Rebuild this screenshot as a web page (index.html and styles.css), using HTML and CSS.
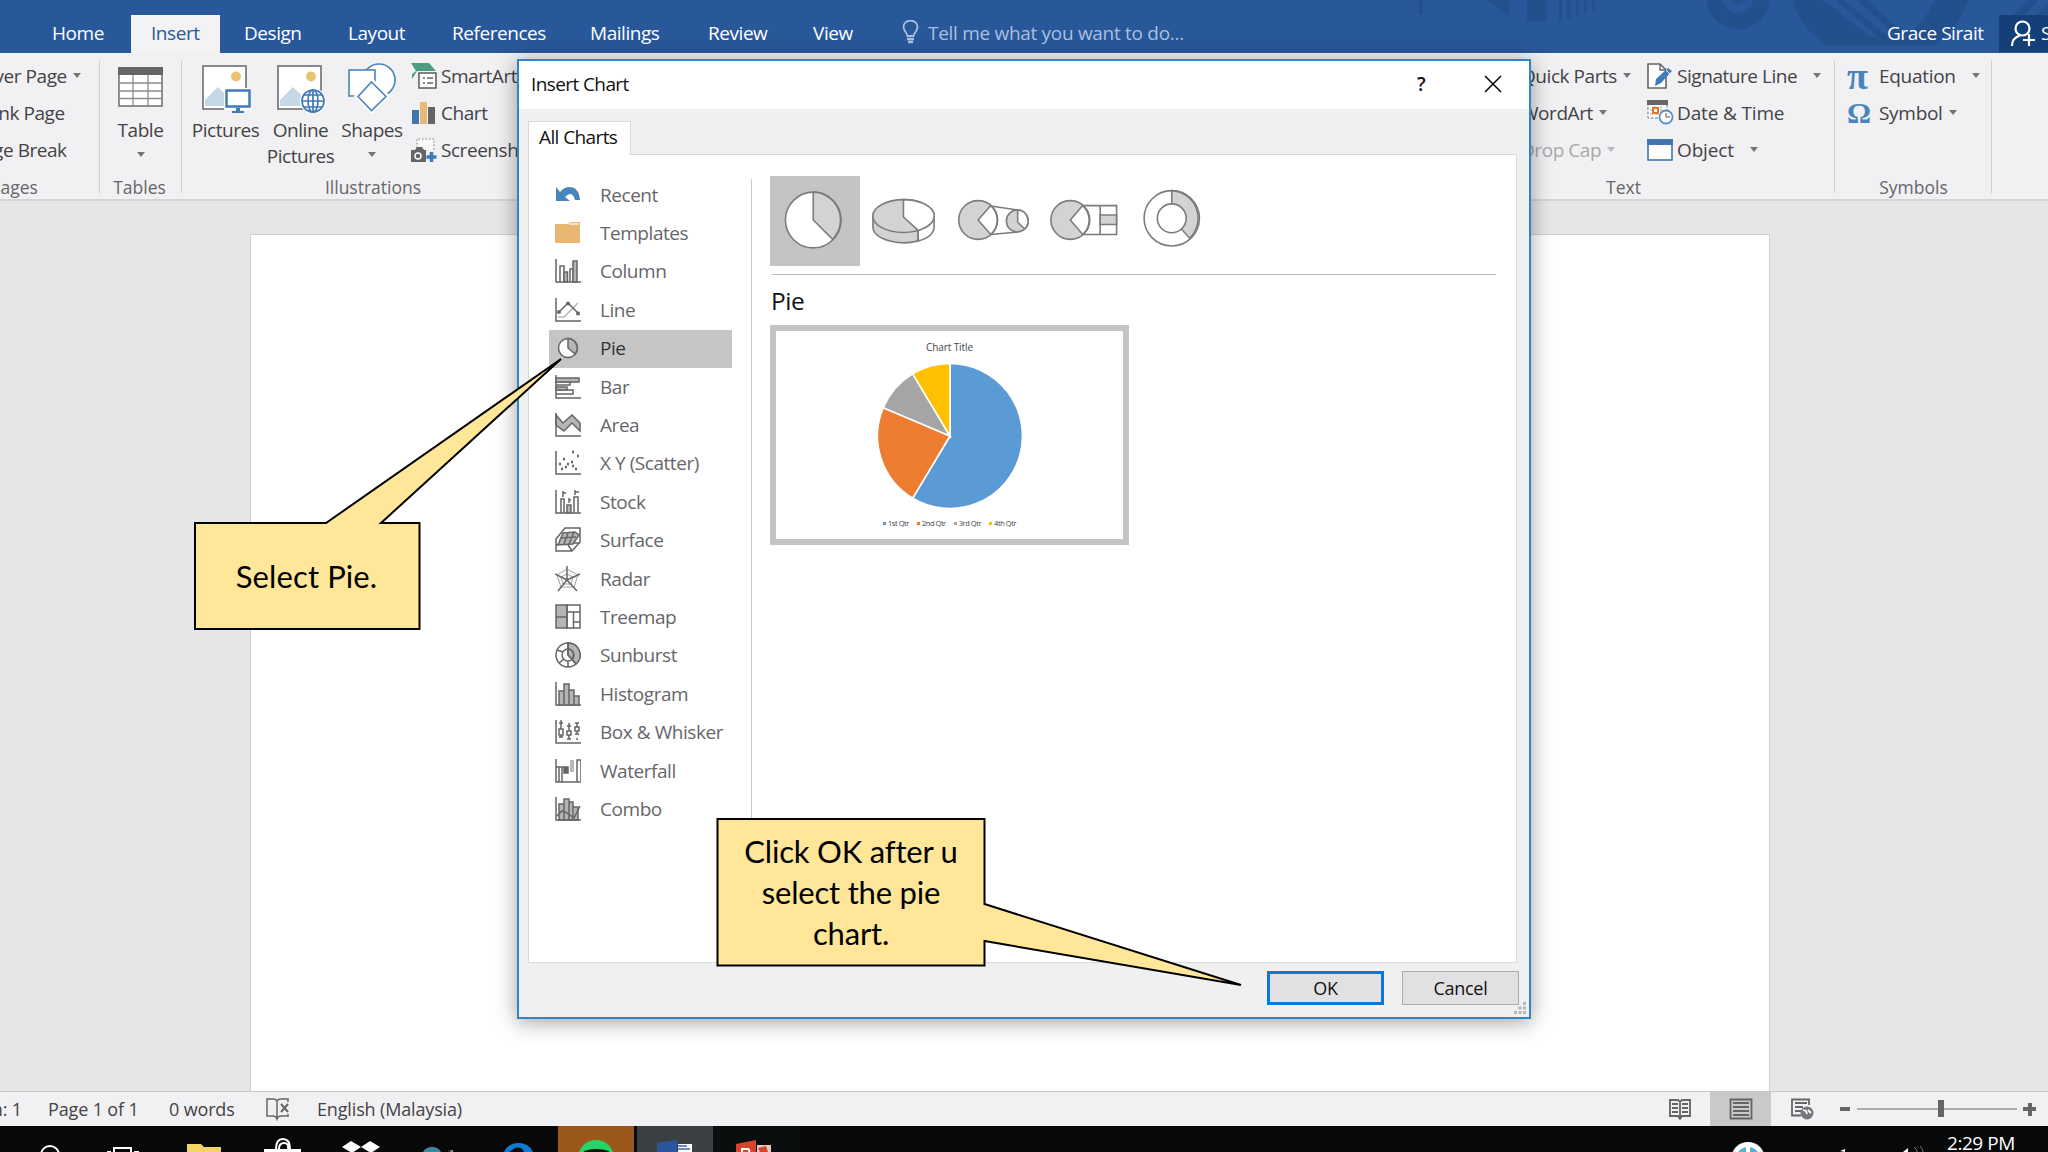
FILE: index.html
```
<!DOCTYPE html>
<html lang="en">
<head>
  <meta charset="UTF-8">
  <title>Word - Insert Chart</title>
  <link rel="stylesheet" href="styles.css">
</head>
<body>
  <div class="app">
    <header class="titlebar">
      <svg class="deco" width="680" height="53" viewBox="1368 0 680 53">
        <g fill="#234f8d">
          <path d="M1419 0h4v14h-4zM1488 0h21v17zM1527 0h20v21h-20zM1559 0h3v20h-3zM1567 0h4v18h-4zM1576 0h3v16h-3zM1584 0h3v13h-3zM1592 0h3v10h-3z"/>
          <path d="M1707 0a31 29 0 0 0 62 0h-16a15 13 0 0 1-30 0z"/>
          <path d="M1732 0h12q-6 8-12 0z"/>
          <path d="M1793 0q6 28 34 45h108q24-18 33-45h-34q-4 14-22 31h-10L1866 0h-9l38 35h-9L1844 0h-8l42 37h-7L1823 0z"/>
          <path d="M2012 15L2029 0h10l-15 15zM2036 15L2048 3v12z"/>
        </g>
      </svg>
      <nav class="tabs">
        <span class="tab t-home">Home</span>
        <span class="tab active">Insert</span>
        <span class="tab t-design">Design</span>
        <span class="tab t-layout">Layout</span>
        <span class="tab t-ref">References</span>
        <span class="tab t-mail">Mailings</span>
        <span class="tab t-review">Review</span>
        <span class="tab t-view">View</span>
        <span class="tellme">
          <svg width="17" height="24" viewBox="0 0 17 24" fill="none" stroke="#a9bfdf" stroke-width="1.8"><path d="M5.5 16c0-3-4-5-4-9a7 6.5 0 0 1 14 0c0 4-4 6-4 9z"/><path d="M5 19h7M6 22h5" stroke-width="2.5"/></svg>
          <span>Tell me what you want to do...</span>
        </span>
      </nav>
      <div class="account">
        <span class="user">Grace Sirait</span>
        <span class="share">
          <svg width="26" height="27" viewBox="0 0 26 27" fill="none" stroke="#fff" stroke-width="2.2"><circle cx="12.5" cy="8.5" r="7"/><path d="M2 26c0-6 3-9 8-10.5M13 20h12M19 14v12"/></svg>
          <span>Share</span>
        </span>
      </div>
    </header>

    <section class="ribbon">
      <div class="group pages">
        <div class="rows">
          <div class="cmd">Cover Page<i class="arrow"></i></div>
          <div class="cmd">Blank Page</div>
          <div class="cmd">Page Break</div>
        </div>
        <div class="caption">Pages</div>
      </div>
      <div class="group tables">
        <div class="bigs">
          <div class="big">
            <svg width="46" height="50" viewBox="0 0 46 50"><rect x="1" y="5" width="43" height="38" fill="#fff" stroke="#757477" stroke-width="1.6"/><path d="M0 4h45v8H0z" fill="#656467"/><path d="M15 12v31M30 12v31M1 20h43M1 28h43M1 35.5h43" stroke="#8b8a8d" stroke-width="1.3"/></svg>
            <span>Table</span><i class="arrow"></i>
          </div>
        </div>
        <div class="caption">Tables</div>
      </div>
      <div class="group illustrations">
        <div class="bigs">
          <div class="big">
            <svg width="50" height="50" viewBox="0 0 50 50"><rect x="2" y="3" width="43" height="43" fill="#fff" stroke="#757477" stroke-width="1.7"/><circle cx="35" cy="13.5" r="5" fill="#e8c373"/><path d="M4 43V37L17 24l10 10v9z" fill="#c5d8e8"/><path d="M23 25h27v22H23z" fill="#fff"/><rect x="25.5" y="27.5" width="23" height="16" fill="#fff" stroke="#3f7bb6" stroke-width="2.5"/><path d="M35 45h4v3h4v2H31v-2h4z" fill="#3f7bb6"/></svg>
            <span>Pictures</span>
          </div>
          <div class="big">
            <svg width="50" height="50" viewBox="0 0 50 50"><rect x="2" y="3" width="43" height="43" fill="#fff" stroke="#757477" stroke-width="1.7"/><circle cx="35" cy="13.5" r="5" fill="#e8c373"/><path d="M4 43V37L17 24l10 10v9z" fill="#c5d8e8"/><circle cx="37" cy="38" r="13" fill="#fff"/><g fill="none" stroke="#3f7bb6" stroke-width="1.7"><circle cx="37" cy="38" r="11"/><ellipse cx="37" cy="38" rx="5" ry="11"/><path d="M26 38h22M28 32h18M28 44h18M37 27v22"/></g></svg>
            <span>Online<br>Pictures</span>
          </div>
          <div class="big shapes">
            <svg width="50" height="50" viewBox="0 0 50 50" fill="#fff" stroke="#4a84bd" stroke-width="1.6"><circle cx="32" cy="17" r="16"/><rect x="2" y="7" width="26" height="26"/><path d="M24.5 18L40 33.5 24.5 48 10 33.5z" stroke="#fff" stroke-width="5"/><path d="M24.5 19L39 33.5 24.5 47.5 11 33.5z"/></svg>
            <span>Shapes</span><i class="arrow"></i>
          </div>
        </div>
        <div class="rows">
          <div class="cmd"><svg width="26" height="28" viewBox="0 0 26 28"><path d="M0 1h18l7 8H6L1 17V12l4-3z" fill="#4f9c84"/><rect x="8" y="11" width="17" height="15" fill="#fff" stroke="#656467" stroke-width="1.6"/><path d="M12 16h2M12 21h2M16 16h6M16 21h6" stroke="#656467" stroke-width="1.6"/></svg>SmartArt</div>
          <div class="cmd"><svg width="26" height="28" viewBox="0 0 26 28"><path d="M1 11h7v14H1z" fill="#3f76ae"/><path d="M9 3h7v22H9z" fill="#e8b877"/><path d="M17 8h7v17h-7z" fill="#656467"/></svg>Chart</div>
          <div class="cmd"><svg width="26" height="28" viewBox="0 0 26 28"><path d="M6 12V3h17v12" fill="#fbfafb" stroke="#757477" stroke-dasharray="1.5 2"/><path d="M0 14h4l2-3h5l2 3h2v12H0z" fill="#656467"/><circle cx="7" cy="20" r="3" fill="none" stroke="#fff" stroke-width="1.5"/><path d="M20.5 16v10M15.5 21h10" stroke="#3f7bb6" stroke-width="3.5"/></svg>Screenshot</div>
        </div>
        <div class="caption">Illustrations</div>
      </div>
      <div class="group text">
        <div class="rows">
          <div class="cmd">Quick Parts<i class="arrow"></i></div>
          <div class="cmd">WordArt<i class="arrow"></i></div>
          <div class="cmd off">Drop Cap<i class="arrow"></i></div>
        </div>
        <div class="rows second">
          <div class="cmd"><svg width="27" height="28" viewBox="0 0 27 28"><path d="M1 2h12l6 6v18H1z" fill="#fff" stroke="#656467" stroke-width="1.6"/><path d="M13 2v6h6" fill="none" stroke="#656467" stroke-width="1.4"/><path d="M9 17L21 6l4 3-11 12-6 3z" fill="#3f7bb6"/><path d="M19 8l4 4" stroke="#fff"/></svg>Signature Line<i class="arrow far"></i></div>
          <div class="cmd wide"><svg width="27" height="28" viewBox="0 0 27 28"><rect x="1" y="2" width="19" height="17" fill="#fff" stroke="#757477" stroke-dasharray="3 1.5"/><path d="M0 1h21v5H0z" fill="#656467"/><path d="M3 11h14M3 15h14M8 7v10M14 7v10" stroke="#aaa" stroke-dasharray="3 2"/><rect x="6" y="9" width="5" height="5" fill="#fff" stroke="#e0742c" stroke-width="2"/><circle cx="19" cy="18" r="6.5" fill="#fff" stroke="#5b90c4" stroke-width="1.8"/><path d="M19 14v4h4" fill="none" stroke="#555"/></svg>Date &amp; Time</div>
          <div class="cmd wide"><svg width="27" height="28" viewBox="0 0 27 28"><rect x="1" y="4" width="24" height="20" fill="#fff" stroke="#4474ad" stroke-width="1.6"/><path d="M0 3h26v6H0z" fill="#4474ad"/></svg>Object<i class="arrow far"></i></div>
        </div>
        <div class="caption">Text</div>
      </div>
      <div class="group symbols">
        <div class="rows">
          <div class="cmd"><b class="glyph pi">π</b>Equation<i class="arrow far"></i></div>
          <div class="cmd"><b class="glyph">Ω</b>Symbol<i class="arrow"></i></div>
        </div>
        <div class="caption">Symbols</div>
      </div>
    </section>

    <main class="workspace">
      <div class="paper"></div>
    </main>

    <footer class="statusbar">
      <span class="clip">Section: 1</span>
      <span class="st-page">Page 1 of 1</span>
      <span class="st-words">0 words</span>
      <svg class="st-book" width="25" height="24" viewBox="0 0 25 24" fill="none" stroke="#656467" stroke-width="1.5"><path d="M22 5V2h-7q-3 0-4 2-1-2-4-2H1v17h6q3 0 4 3 1-3 4-3h7v-2M11 4v17"/><path d="M15 7l7 8M22 7l-7 8" stroke-width="2"/></svg>
      <span class="st-lang">English (Malaysia)</span>
      <div class="views">
        <span class="view"><svg width="24" height="24" viewBox="0 0 24 24" fill="none" stroke="#656467" stroke-width="1.8"><path d="M2 3h8l2 2 2-2h8v16h-8l-2 3-2-3H2zM12 4v17"/><path d="M4 7h6M4 11h6M4 15h6M14 7h6M14 11h6M14 15h6"/></svg></span>
        <span class="view on"><svg width="24" height="24" viewBox="0 0 24 24" fill="none" stroke="#656467" stroke-width="1.8"><path d="M1.5 2.5h21v19h-21zM4 6h16M4 10h16M4 14h16M4 18h16"/></svg></span>
        <span class="view"><svg width="24" height="24" viewBox="0 0 24 24" fill="none" stroke="#656467" stroke-width="1.8"><path d="M19 8V2.5H2v16h9M5 6h12M5 10h8M5 14h6"/><circle cx="17" cy="16" r="6.5" fill="#77767a" stroke="none"/><path d="M13 13l3 1 1 3M18 13l3 3" stroke="#fff" stroke-width="1.8"/></svg></span>
      </div>
      <div class="zoom"><i class="minus"></i><div class="track"><i class="thumb"></i></div><i class="plus"></i></div>
    </footer>

    <footer class="taskbar">
      <svg width="800" height="26" viewBox="0 0 800 26">
        <path d="M558 0h76v26h-76z" fill="#9c581b"/><path d="M637 0h76v26h-76z" fill="#3b4042"/><path d="M713 0h87v26h-87z" fill="#0b0e0f"/>
        <circle cx="50" cy="29" r="9" fill="none" stroke="#fff" stroke-width="2"/>
        <path d="M114 27v-5h17v5M107 26h4M134 26h5" fill="none" stroke="#fff" stroke-width="2"/>
        <path d="M187 18h14l3 3h17v6h-34z" fill="#f5d467"/>
        <path d="M264 23h37v4h-37z" fill="#fff"/><path d="M276 23q0-10 7-10t7 10M279 23q0-6 5-6t4 6" fill="none" stroke="#fff" stroke-width="2"/>
        <path d="M342 21l9-6 10 6-9 6zM361 21l9-6 10 6-9 6z" fill="#fff"/>
        <path d="M423 26a10 9 0 0 1 18 0z" fill="#3d8aa4"/><path d="M448 25l5-1v2z" fill="#aaa"/>
        <path d="M504 26a15 12 0 0 1 29 0h-9q-2-6-9-4l-6 4z" fill="#0f7bd4"/>
        <circle cx="596" cy="32" r="18" fill="#25d466"/><path d="M584 25q12-4 25 0v2h-25z" fill="#111"/>
        <path d="M657 17l20-3v12h-20z" fill="#2c55a0"/><path d="M678 18h14v8h-14z" fill="#fff"/><path d="M678 20h9M678 23h12" stroke="#3e65a8" stroke-width="1.5"/>
        <path d="M736 18l20-4v12h-20z" fill="#d5452a"/><path d="M757 19h14v7h-14z" fill="#e9c9c2"/><path d="M758 22l8-2 2 6h-8z" fill="#d5452a"/><path d="M742 26v-3h6q2 1 1 3" fill="none" stroke="#fff" stroke-width="2"/>
      </svg>
      <div class="tray">
        <svg width="200" height="26" viewBox="0 0 200 26"><circle cx="18" cy="33" r="17" fill="#fff"/><circle cx="18" cy="33" r="12" fill="#58afd3"/><path d="M16 20h4v6h-4z" fill="#fff"/><path d="M110 25l5-2v3zM173 26l5-4v4z" fill="#fff"/><path d="M184 21q3 2 3 5M190 20q3 3 3 6" fill="none" stroke="#777"/></svg>
        <span class="clock">2:29 PM</span>
      </div>
    </footer>

    <div class="dialog">
      <div class="dlg-title">
        <span>Insert Chart</span>
        <b class="help">?</b>
        <svg width="18" height="18" viewBox="0 0 18 18" stroke="#000" stroke-width="1.5"><path d="M1 1l16 16M17 1L1 17"/></svg>
      </div>
      <div class="dlg-tab">All Charts</div>
      <div class="pane">
        <ul class="kinds">
          <li><svg viewBox="0 0 26 26"><path d="M1 5v14h14l-5-4q7-7 10 3h5q-1-13-11-13-5 0-9 5z" fill="#4a84bd"/></svg>Recent</li>
          <li><svg viewBox="0 0 26 26"><path d="M0 4h13l2-2h10v21H0z" fill="#e8b873"/><path d="M14 4h10" stroke="#fff" stroke-width="1.2"/></svg>Templates</li>
          <li><svg class="ln" viewBox="0 0 26 26"><path d="M1 1v23h25M5 24V8h4v16M15 24V11h3v13"/><path class="gr" d="M9 14h3.5v10H9zM18 3h4v21h-4z"/></svg>Column</li>
          <li><svg class="ln" viewBox="0 0 26 26"><path d="M1 1v23h25"/><path d="M3 20h6l14-14" stroke="#b5b4b6"/><path d="M4 15l9-9 11 11"/><path d="M3 14h2v2H3zM12 5.5h2v2h-2zM22 15.5h2v2h-2z" fill="#656467"/></svg>Line</li>
          <li class="sel"><svg class="ln" viewBox="0 0 26 26"><circle cx="13" cy="13" r="9.5" fill="#fff"/><path class="gr" d="M13 3.5V13l7 6a9.5 9.5 0 0 0-7-15.5z"/></svg>Pie</li>
          <li><svg class="ln" viewBox="0 0 26 26"><path d="M1 1v23h25M1 8h14v3H1M1 16h17v4H1"/><path class="gr" d="M1 4h23v4H1zM1 13h11v3H1z"/></svg>Bar</li>
          <li><svg class="ln" viewBox="0 0 26 26"><path class="gr" d="M1 3l7 8 9-8 8 8v8l-8-8-8 8-8-6z"/><path d="M1 1v23h25"/></svg>Area</li>
          <li><svg class="ln" viewBox="0 0 26 26"><path d="M1 1v23h25"/><path d="M4 14h3M6 19h3M8 9h3M12 14h3M16 12h3M17 16h3M20 19h3M22 6h3M17 2h3M10 17h3" stroke-width="2.5" stroke-dasharray="2 1"/></svg>X Y (Scatter)</li>
          <li><svg class="ln" viewBox="0 0 26 26"><path d="M1 1v23h25M6 24V10h3v14M19 24V8h4v16M8 2v6M8 4h3M14 9v5M14 11h2M20 1v5M20 3h4"/><path class="gr" d="M12 16h4v8h-4z"/></svg>Stock</li>
          <li><svg class="ln" viewBox="0 0 26 26"><path d="M1 12L10 1h15v14l-8 9H1zM1 18l7-2M8 16h17M17 24l-4-6"/><path class="gr" d="M3 18l5-12 12-1 4 3-6 9z"/><path d="M6 11l15-1M13 6L9 17M19 5l-5 12"/></svg>Surface</li>
          <li><svg class="ln" viewBox="0 0 26 26"><path d="M12 3l11 6-4 12H6L2 9zM12 8l6 3-2 7H8l-2-7z" stroke="#a3a2a5" stroke-width="1"/><path d="M12 0v14L0 8M12 14L3 25M12 14l10 11M12 14l13-6"/></svg>Radar</li>
          <li><svg class="ln" viewBox="0 0 26 26"><path class="gr" d="M1 1h11v12H1zM1 13h11v11H1z"/><path d="M12 1h13v23H12zM12 8h13M18.5 8v16M18.5 18H25"/></svg>Treemap</li>
          <li><svg class="ln" viewBox="0 0 26 26"><circle cx="13" cy="13" r="12"/><path class="gr" d="M13 1a12 12 0 0 1 8 21l-8-9z"/><circle cx="13" cy="13" r="6" fill="#fff"/><path class="gr" d="M13 7v6l4 4a6 6 0 0 0-4-10z"/><path d="M13 1v12l8 9M2 8l6 2M4 21l5-4M13 19v6"/></svg>Sunburst</li>
          <li><svg class="ln" viewBox="0 0 26 26"><path d="M1 1v23h25"/><path class="gr" d="M4 10h5v14H4zM9 3h5v21H9zM14 9h5v15h-5zM19 15h5v9h-5z"/></svg>Histogram</li>
          <li><svg class="ln" viewBox="0 0 26 26"><path d="M1 1v23h25M4 4h4M6 1v9M6 16v2M4 18h4M4 10h4v6H4zM12 7h4M14 4v8M14 16v4M12 20h4M12 12h4v4h-4zM20 4h4M22 4v4M22 12v3M20 15h4M20 8h4v4h-4zM22 19v2"/></svg>Box &amp; Whisker</li>
          <li><svg class="ln" viewBox="0 0 26 26"><path d="M1 1v23h25V2h-4v22M1 9h6v15M4 9v15"/><path d="M7 9h6v6H9V9z" fill="#656467"/><path d="M15 2h4v12h-4z" fill="#b9b8ba" stroke="none"/></svg>Waterfall</li>
          <li><svg class="ln" viewBox="0 0 26 26"><path class="gr" d="M4 8h5v16H4zM9 3h5v21H9zM14 6h4v18h-4zM18 11h5v13h-5z"/><path d="M1 1v23h25M2 20l5-5 5 2 7 5 6-12"/></svg>Combo</li>
        </ul>
        <div class="detail">
          <div class="subtypes">
            <svg class="chosen" viewBox="0 0 90 90"><circle cx="43.5" cy="44" r="28" fill="#fff"/><path class="g" d="M43.5 16v28l19.5 19.5A28 28 0 0 0 43.5 16z"/></svg>
            <svg viewBox="0 0 90 90"><path class="g" d="M13 40v11a31 16 0 0 0 45.5 14V54z"/><path class="w" d="M58.5 54v11Q74 61 74.5 51V40z"/><ellipse class="g" cx="43.7" cy="40" rx="30.8" ry="16.5"/><path class="w" d="M43.7 23.5V41l14.8 13.5A30.8 16.5 0 0 0 43.7 23.5z"/></svg>
            <svg viewBox="0 0 90 90"><circle class="g" cx="29.3" cy="44" r="19.5"/><path class="w" d="M42 29.5L29.3 44 42 58.5a19.5 19.5 0 0 0 0-29z"/><path d="M42 30l27 4M42 58.5l27-2.5"/><circle class="g" cx="68.7" cy="45" r="11"/><path class="w" d="M69 34v12l7 7a11 11 0 0 0-7-19z"/></svg>
            <svg viewBox="0 0 90 90"><circle class="g" cx="31.5" cy="44" r="19.5"/><path class="w" d="M44 29.5L31.5 44 44 58.5a19.5 19.5 0 0 0 0-29z"/><path d="M44 29.5h34v29H44M61.5 29.5v29"/><path class="g" d="M61.5 39H78v9.5H61.5z"/></svg>
            <svg viewBox="0 0 90 90"><circle class="w" cx="44" cy="42.3" r="27.8"/><path class="g" d="M44 14.5v27.8l18 20A27.8 27.8 0 0 0 44 14.5z"/><circle class="w" cx="44" cy="42.3" r="14.5"/></svg>
          </div>
          <h2>Pie</h2>
          <div class="preview">
            <div class="chart-title">Chart Title</div>
            <svg width="146" height="146" viewBox="-73 -73 146 146" stroke="#fff" stroke-width="1.6">
              <path d="M0 0V-72.5A72.5 72.5 0 1 1-37.3 62.2z" fill="#5b9bd5"/>
              <path d="M0 0L-37.3 62.2A72.5 72.5 0 0 1-66.7-28.3z" fill="#ed7d31"/>
              <path d="M0 0L-66.7-28.3A72.5 72.5 0 0 1-37.3-62.2z" fill="#a5a5a5"/>
              <path d="M0 0L-37.3-62.2A72.5 72.5 0 0 1 0-72.5z" fill="#ffc000"/>
            </svg>
            <div class="legend">
              <span class="q1">1st Qtr</span><span class="q2">2nd Qtr</span><span class="q3">3rd Qtr</span><span class="q4">4th Qtr</span>
            </div>
          </div>
        </div>
      </div>
      <div class="dlg-buttons">
        <button class="ok">OK</button>
        <button>Cancel</button>
        <svg class="grip" width="12" height="12" viewBox="0 0 12 12" fill="#b5b4b6"><path d="M9 0h3v3H9zM4.5 4.5h3v3h-3zM9 4.5h3v3H9zM0 9h3v3H0zM4.5 9h3v3h-3zM9 9h3v3H9z"/></svg>
      </div>
    </div>

    <!-- callouts drawn over the dialog -->
    <div class="callout c-pie">
      <svg width="368" height="272" viewBox="0 0 368 272"><path d="M1 165h131L367 1 187 165h38.5v106H1z"/></svg>
      <p>Select Pie.</p>
    </div>
    <div class="callout c-ok">
      <svg width="526" height="150" viewBox="0 0 526 150"><path d="M1.5 1h267v85L525 167 268.5 123v24.5h-267z"/></svg>
      <p>Click OK after u<br>select the pie<br>chart.</p>
    </div>
  </div>
</body>
</html>
```
FILE: styles.css
```
* {
  box-sizing: border-box;
}

body {
  margin: 0;
  font-family: "Open Sans", "Noto Sans", sans-serif;
  font-size: 19px;
  letter-spacing: -0.45px;
  color: #444346;
  white-space: nowrap;
}

svg {
  flex: none;
  display: block;
}

.app {
  position: relative;
  width: 2048px;
  height: 1152px;
  overflow: hidden;
  display: flex;
  flex-direction: column;
}

/* title bar */
.titlebar {
  position: relative;
  height: 53px;
  flex: none;
  background: #28579a;
  color: #fff;
  display: flex;
  justify-content: space-between;
  align-items: flex-end;
}

.deco {
  position: absolute;
  right: 0;
  top: 0;
}

.tabs {
  display: flex;
  height: 38px;
  line-height: 36px;
}

.tab {
  flex: none;
  width: 104px;
}

.t-home { width: 131px; padding-left: 52px; }
.tab.active {
  width: 89px;
  padding-left: 20px;
  background: #f3f2f4;
  color: #28579a;
}
.t-design { width: 128px; padding-left: 24px; }
.t-ref { width: 138px; }
.t-mail { width: 118px; }
.t-review { width: 105px; }
.t-view { width: 88px; }

.tellme {
  display: flex;
  gap: 9px;
  color: #a9bfdf;
  letter-spacing: -0.3px;
}

.tellme svg {
  margin: 5px 0 0 1px;
}

.account {
  position: relative;
  display: flex;
  height: 38px;
  line-height: 36px;
}

.user {
  width: 112px;
}

.share {
  display: flex;
  gap: 5px;
  width: 49px;
  height: 37px;
  padding-left: 11px;
  overflow: hidden;
  background: #153f79;
}

.share svg {
  margin-top: 5px;
}

/* ribbon */
.ribbon {
  height: 148px;
  flex: none;
  display: flex;
  background: #f1f0f2;
  border-bottom: 2px solid #d5d4d6;
  overflow: hidden;
}

.group {
  position: relative;
  flex: none;
  display: grid;
  grid-template-rows: 111px 29px;
  grid-template-columns: auto 1fr;
  padding-top: 4px;
  height: 148px;
}

.group::after {
  content: "";
  position: absolute;
  right: 0;
  top: 7px;
  width: 1.5px;
  height: 133px;
  background: #cfced0;
}

.caption {
  grid-column: 1 / -1;
  grid-row: 2;
  text-align: center;
  font-size: 17.5px;
  letter-spacing: 0;
  line-height: 38px;
  color: #67666a;
}

.pages { width: 100px; }
.pages .rows { margin-left: -28px; }
.pages .caption { margin-left: -10px; text-align: left; }
.tables { width: 82px; }
.tables .caption { padding-right: 3px; }
.illustrations { width: 382px; padding-left: 6px; }
.illustrations .caption { padding-right: 6px; }
.illustrations::after { display: none; }
.text { width: 423px; margin-left: 848px; }
.text .rows { margin-left: 109px; width: 126px; }
.text .rows.second { margin-left: 0; }
.symbols { width: 157px; padding-left: 12px; }
.symbols .caption { margin-left: -12px; }

.bigs {
  display: flex;
}

.big {
  width: 75px;
  padding-top: 6px;
  display: flex;
  flex-direction: column;
  align-items: center;
  text-align: center;
  line-height: 26px;
}

.tables .big { width: 81px; }
.big.shapes { width: 68px; }
.big span { margin-top: 4px; }

.arrow {
  border: 4.5px solid transparent;
  border-top: 5px solid #757477;
  border-bottom: 0;
  margin-left: 6px;
}

.arrow.far { margin-left: 16px; }
.big .arrow { margin: 9px 0 0; }

.rows {
  display: grid;
  grid-template-rows: repeat(3, 37px);
}

.illustrations .rows { padding-left: 5px; }

.cmd {
  display: flex;
  align-items: center;
}

.cmd svg { margin-right: 4px; }
.second .cmd svg { margin-right: 3px; }
.cmd.wide { letter-spacing: -0.15px; }
.cmd.off { color: #a9a8ab; }
.off .arrow { border-top-color: #bbb; }

.symbols .cmd { letter-spacing: -0.3px; }

.glyph {
  width: 32px;
  font: bold 30px/28px "Liberation Serif", serif;
  color: #4a84bd;
}

.glyph.pi {
  font-size: 38px;
}

/* document */
.workspace {
  flex: 1;
  padding: 33px 278px 0 250px;
  background: #e6e5e8;
}

.paper {
  height: 100%;
  background: #fff;
  border: 1px solid #cfced1;
  border-bottom: 0;
}

.statusbar {
  height: 35px;
  flex: none;
  display: flex;
  align-items: center;
  background: #f1f0f2;
  border-top: 1.5px solid #c6c5c8;
  font-size: 18px;
  letter-spacing: -0.15px;
}

.clip {
  width: 22px;
  display: flex;
  justify-content: flex-end;
}

.st-page { width: 121px; margin-left: 26px; }
.st-words { width: 97px; }
.st-lang { margin-left: 26px; }

.views {
  display: flex;
  margin-left: auto;
  height: 34px;
}

.view {
  width: 61px;
  display: flex;
  justify-content: center;
  align-items: center;
}

.view.on { background: #c9c8ca; }

.zoom {
  display: flex;
  align-items: center;
  width: 208px;
  margin-left: 8px;
}

.minus {
  width: 10px;
  height: 4px;
  background: #656467;
}

.track {
  width: 160px;
  height: 2px;
  margin: 0 6px 0 7px;
  background: #acabad;
}

.thumb {
  display: block;
  width: 6px;
  height: 17px;
  margin: -8px 0 0 81px;
  background: #656467;
}

.plus {
  width: 13px;
  height: 13px;
  background: linear-gradient(#656467, #656467) center / 13px 4px no-repeat,
    linear-gradient(#656467, #656467) center / 4px 13px no-repeat;
}

.taskbar {
  height: 26px;
  flex: none;
  display: flex;
  justify-content: space-between;
  background: #060809;
}

.tray {
  display: flex;
  width: 318px;
}

.clock {
  margin-left: 17px;
  color: #fff;
  line-height: 34px;
  width: 0;
}

/* dialog window */
.dialog {
  position: absolute;
  left: 517px;
  top: 59px;
  width: 1014px;
  height: 960px;
  background: #f0f0f0;
  border: 2px solid #2e86c8;
  box-shadow: 0 3px 20px rgba(0, 0, 0, 0.38);
  display: flex;
  flex-direction: column;
}

.dlg-title {
  height: 48px;
  flex: none;
  display: flex;
  align-items: center;
  padding: 0 27px 2px 12px;
  background: #fff;
  color: #111;
  letter-spacing: -0.6px;
}

.help {
  margin-left: auto;
  margin-right: 59px;
  font-weight: 600;
}

.dlg-tab {
  position: relative;
  z-index: 1;
  width: 103px;
  height: 34px;
  margin: 12px 0 -1px 9px;
  padding-left: 10px;
  line-height: 31px;
  background: #fff;
  border: 1px solid #d9d9da;
  border-bottom: 0;
  color: #111;
  letter-spacing: -0.6px;
}

.pane {
  width: 989px;
  height: 809px;
  margin-left: 9px;
  padding: 21px 19px 0 20px;
  display: flex;
  background: #fff;
  border: 1px solid #d9d9da;
}

.kinds {
  width: 203px;
  height: 664px;
  margin: 3px 0 0;
  padding: 0;
  list-style: none;
  border-right: 1.5px solid #c9c8ca;
  color: #67666a;
  letter-spacing: -0.45px;
}

.kinds li {
  display: flex;
  align-items: center;
  gap: 19px;
  width: 183px;
  height: 38.4px;
  padding: 0 0 1px 6px;
}

.kinds li:first-child { margin-top: -3px; }

.kinds svg {
  width: 26px;
  height: 26px;
}

.kinds .sel {
  background: #c6c5c6;
  color: #333;
}

.ln {
  fill: none;
  stroke: #656467;
  stroke-width: 1.5;
}

.gr { fill: #b5b4b6; }

.detail {
  margin-left: 18px;
  width: 726px;
}

.subtypes {
  display: flex;
  height: 99px;
  background: linear-gradient(#bdbcc0, #bdbcc0) right bottom / 724px 1.5px no-repeat;
}

.subtypes svg {
  width: 89.5px;
  height: 90px;
  fill: none;
  stroke: #7c7b7e;
  stroke-width: 1.6;
}

.subtypes .chosen { background: #c4c3c6; }
.subtypes .g { fill: #d3d2d4; }
.subtypes .w { fill: #fff; }

.detail h2 {
  margin: 10px 0 0 1px;
  font-size: 24.5px;
  font-weight: 400;
  line-height: 32px;
  color: #111;
}

.preview {
  width: 359px;
  height: 220px;
  margin-top: 8px;
  padding-top: 8px;
  border: 6px solid #c4c3c6;
  display: flex;
  flex-direction: column;
  align-items: center;
}

.chart-title {
  font-size: 10px;
  line-height: 16px;
  letter-spacing: -0.1px;
  margin-bottom: 8px;
}

.legend {
  display: flex;
  gap: 8px;
  margin-top: 7px;
  font-size: 7.5px;
  line-height: 14px;
}

.legend span::before {
  content: "";
  display: inline-block;
  width: 3px;
  height: 3px;
  margin: 0 2px 1px 0;
}

.q1::before { background: #5b9bd5; }
.q2::before { background: #ed7d31; }
.q3::before { background: #a5a5a5; }
.q4::before { background: #ffc000; }

.dlg-buttons {
  position: relative;
  display: flex;
  justify-content: flex-end;
  gap: 18px;
  padding: 8px 10px 0;
}

.dlg-buttons button {
  width: 117px;
  height: 34px;
  padding: 0;
  background: #e1e0e2;
  border: 1.5px solid #adacae;
  font: inherit;
  font-size: 18px;
  letter-spacing: -0.3px;
  color: #111;
}

.dlg-buttons .ok { border: 3px solid #0a78d4; }

.grip {
  position: absolute;
  right: 3px;
  top: 39px;
}

/* callouts */
.callout {
  position: absolute;
}

.callout svg {
  overflow: visible;
  fill: #ffe699;
  stroke: #000;
  stroke-width: 2;
}

.callout p {
  position: absolute;
  margin: 0;
  text-align: center;
  font: 31px/41px Lato, sans-serif;
  letter-spacing: -0.2px;
  color: #000;
}

.c-pie { left: 194px; top: 358px; }
.c-pie p { left: 0; top: 198px; width: 225px; letter-spacing: 0.1px; }
.c-ok { left: 716px; top: 818px; }
.c-ok p { left: 0; top: 13px; width: 270px; }
```
